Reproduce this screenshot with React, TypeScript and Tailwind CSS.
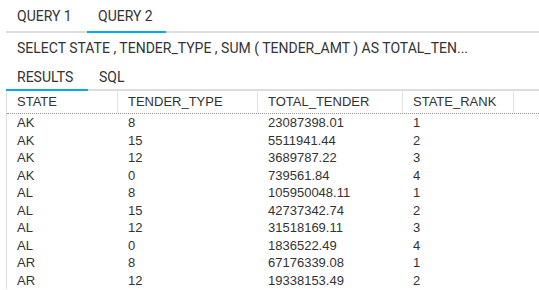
import React from "react";

const rows: [string, string, string, string][] = [
  ["AK", "8", "23087398.01", "1"],
  ["AK", "15", "5511941.44", "2"],
  ["AK", "12", "3689787.22", "3"],
  ["AK", "0", "739561.84", "4"],
  ["AL", "8", "105950048.11", "1"],
  ["AL", "15", "42737342.74", "2"],
  ["AL", "12", "31518169.11", "3"],
  ["AL", "0", "1836522.49", "4"],
  ["AR", "8", "67176339.08", "1"],
  ["AR", "12", "19338153.49", "2"],
];

const cols = ["STATE", "TENDER_TYPE", "TOTAL_TENDER", "STATE_RANK"];
const widths = ["w-[111px]", "w-[140px]", "w-[145px]", "w-[111px]"];

export default function App() {
  return (
    <div className="w-[539px] h-[290px] overflow-hidden bg-white text-[#333] font-['Roboto',sans-serif]">
      {/* query tabs */}
      <div className="flex ml-[6px] border-b-2 border-[#dddddd] h-[33px]">
        <div className="px-[11px] pt-[7px] text-[14px] leading-[18px] w-[81px]">QUERY 1</div>
        <div className="px-[11px] pt-[7px] text-[14px] leading-[18px] w-[79px] border-b-2 border-[#03a9f4] -mb-[2px]">
          QUERY 2
        </div>
      </div>

      <div className="pl-[17px] pt-[7px] h-[30px] text-[14px] leading-[17px] whitespace-nowrap">
        SELECT STATE , TENDER_TYPE , SUM ( TENDER_AMT ) AS TOTAL_TEN...
      </div>

      {/* result tabs */}
      <div className="flex ml-[6px] border-b-2 border-[#dddddd] h-[28px]">
        <div className="px-[11px] pt-[5px] text-[14px] leading-[18px] w-[82px] border-b-2 border-[#03a9f4] -mb-[2px]">
          RESULTS
        </div>
        <div className="px-[11px] pt-[5px] text-[14px] leading-[18px]">SQL</div>
      </div>

      {/* grid */}
      <div className="ml-[6px] border-l border-[#dddddd] font-['Liberation_Sans',Arial,sans-serif] text-[13px]">
        <div className="flex h-[23px] border-b border-dotted border-[#999999]">
          {cols.map((c, i) => (
            <div
              key={c}
              className={`${widths[i]} shrink-0 border-r border-[#e3e3e3] pl-[10px] pt-[3px] leading-[16px]`}
            >
              {c}
            </div>
          ))}
          <div className="flex-1" />
        </div>
        {rows.map((r, i) => (
          <div key={i} className="flex h-[17.5px] leading-[17.5px]">
            {r.map((v, j) => (
              <div key={j} className={`${widths[j]} shrink-0 pl-[10px]`}>
                {v}
              </div>
            ))}
          </div>
        ))}
      </div>
    </div>
  );
}
